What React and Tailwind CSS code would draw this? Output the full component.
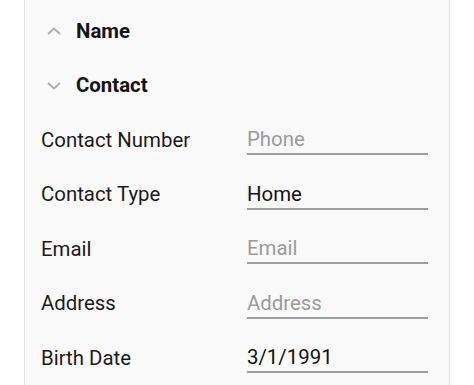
import React from "react";

const fields = [
    {label: "Contact Number", placeholder: "Phone", value: ""},
    {label: "Contact Type", placeholder: "Type", value: "Home"},
    {label: "Email", placeholder: "Email", value: ""},
    {label: "Address", placeholder: "Address", value: ""},
    {label: "Birth Date", placeholder: "Date", value: "3/1/1991"},
];

function Chevron({up}) {
    return (
        <svg width="14" height="8" viewBox="0 0 14 8" className="shrink-0">
            <polyline
                points={up ? "1,7 7,1.5 13,7" : "1,1 7,6.5 13,1"}
                fill="none"
                stroke="#b0b0b0"
                strokeWidth="2"
            />
        </svg>
    );
}

function Section({title, up}) {
    return (
        <div className="flex items-center h-[54.5px] pl-[22px]">
            <Chevron up={up}/>
            <span className="ml-[15px] text-[20.4px] font-bold text-[#141414]">{title}</span>
        </div>
    );
}

function Field({label, placeholder, value}) {
    return (
        <div className="flex items-center h-[54.5px] pl-[16px]">
            <span className="w-[206px] text-[20.4px] text-[#1a1a1a]">{label}</span>
            <input
                defaultValue={value}
                placeholder={placeholder}
                className="w-[181px] h-[30px] pt-[1px] border-b-2 border-[#9e9e9e] bg-transparent outline-none text-[20.4px] text-[#111] placeholder:text-[#9a9a9a]"
            />
        </div>
    );
}

export default function App() {
    return (
        <div className="min-h-screen bg-white" style={{fontFamily: "Roboto, 'Liberation Sans', sans-serif"}}>
            <div className="ml-[24px] w-[426px] h-[385px] pt-[4px] border-x border-[#e2e2e2] bg-[#fafafa] overflow-hidden">
                <Section title="Name" up/>
                <Section title="Contact"/>
                {fields.map((f) => (
                    <Field key={f.label} {...f}/>
                ))}
            </div>
        </div>
    );
}
